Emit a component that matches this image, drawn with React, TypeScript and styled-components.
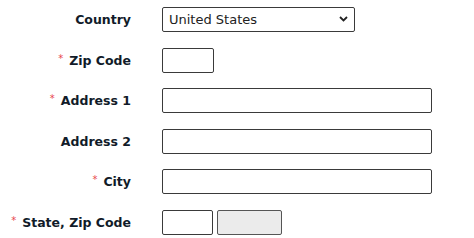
import React from "react";
import styled, { createGlobalStyle } from "styled-components";

const GlobalStyle = createGlobalStyle`
  html, body {
    margin: 0;
    padding: 0;
    background: #ffffff;
  }
  body {
    font-family: Verdana, "DejaVu Sans", sans-serif;
  }
`;

const Form = styled.div`
  display: grid;
  grid-template-columns: 131px 1fr;
  column-gap: 31px;
  row-gap: 15.5px;
  padding-top: 7px;
  width: 474px;
`;

const Label = styled.label`
  display: flex;
  align-items: center;
  justify-content: flex-end;
  height: 25px;
  font-size: 12.5px;
  font-weight: bold;
  color: #111b29;
  white-space: nowrap;
`;

const Star = styled.span`
  color: #e8464e;
  font-size: 10px;
  font-weight: normal;
  margin-right: 6px;
  position: relative;
  top: -2px;
`;

const Field = styled.div`
  display: flex;
  gap: 4px;
  align-items: center;
  height: 25px;
`;

const Input = styled.input<{ $w: number; $disabled?: boolean }>`
  box-sizing: border-box;
  width: ${(p) => p.$w}px;
  height: 25px;
  margin: 0;
  border: 1px solid #3a3a3a;
  border-radius: 2px;
  background: ${(p) => (p.$disabled ? "#ebebeb" : "#ffffff")};
  border-color: ${(p) => (p.$disabled ? "#555" : "#3a3a3a")};
  font-family: Verdana, "DejaVu Sans", sans-serif;
  font-size: 12.5px;
  padding: 0 6px;
  outline: none;
`;

const SelectWrap = styled.div`
  position: relative;
  width: 193px;
  height: 25px;
`;

const Select = styled.select`
  box-sizing: border-box;
  appearance: none;
  -webkit-appearance: none;
  width: 100%;
  height: 25px;
  margin: 0;
  border: 1px solid #3a3a3a;
  border-radius: 2px;
  background: #ffffff;
  color: #222;
  font-family: Verdana, "DejaVu Sans", sans-serif;
  font-size: 13px;
  padding: 0 0 0 6px;
  outline: none;
`;

const Chevron = styled.svg`
  position: absolute;
  right: 7px;
  top: 9px;
  pointer-events: none;
`;

const Row = ({
  label,
  required,
  children,
}: {
  label: string;
  required?: boolean;
  children: React.ReactNode;
}) => (
  <>
    <Label>
      {required && <Star>*</Star>}
      {label}
    </Label>
    <Field>{children}</Field>
  </>
);

export default function App() {
  return (
    <>
      <GlobalStyle />
      <Form>
        <Row label="Country">
          <SelectWrap>
            <Select defaultValue="US">
              <option value="US">United States</option>
            </Select>
            <Chevron width="9" height="6" viewBox="0 0 9 6">
              <path
                d="M1 1 L4.5 4.5 L8 1"
                fill="none"
                stroke="#222"
                strokeWidth="1.8"
              />
            </Chevron>
          </SelectWrap>
        </Row>
        <Row label="Zip Code" required>
          <Input $w={52} />
        </Row>
        <Row label="Address 1" required>
          <Input $w={270} />
        </Row>
        <Row label="Address 2">
          <Input $w={270} />
        </Row>
        <Row label="City" required>
          <Input $w={270} />
        </Row>
        <Row label="State, Zip Code" required>
          <Input $w={51} />
          <Input $w={65} $disabled disabled />
        </Row>
      </Form>
    </>
  );
}
